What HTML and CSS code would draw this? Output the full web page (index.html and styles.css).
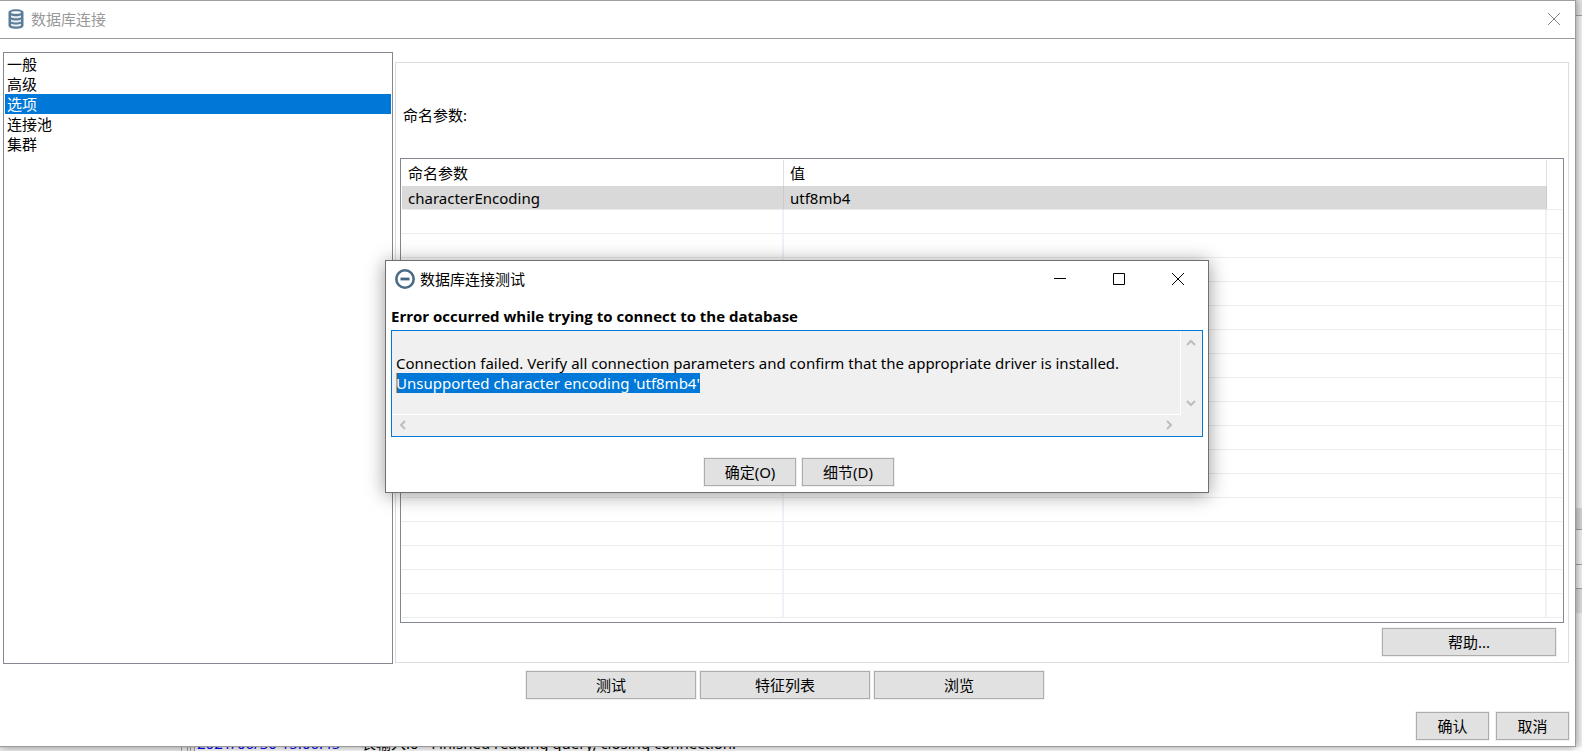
FILE: index.html
```html
<!DOCTYPE html>
<html lang="zh-CN">
<head>
<meta charset="utf-8">
<title>数据库连接</title>
<link rel="stylesheet" href="styles.css">
</head>
<body>
<div class="desktop">
  <div class="workspace">
    <section class="window" aria-label="数据库连接">
      <header class="titlebar">
        <svg class="db-icon" viewBox="0 0 16 20" aria-hidden="true">
          <path d="M.5 3.500v13C.5 18.500 3.500 19.800 8 19.800s7.500-1.300 7.500-3.300v-13C15.500 1.500 12.500.2 8 .2S.5 1.500.5 3.500z" fill="#5b7d97"/>
          <ellipse cx="8" cy="3.500" rx="5" ry="1.300" fill="#fff"/>
          <path d="M3 6.200c2 1.300 8 1.300 10 0v2c-2 1.400-8 1.400-10 0zM3 10.400c2 1.300 8 1.300 10 0v2c-2 1.400-8 1.400-10 0zM3 14.600c2 1.300 8 1.300 10 0v1.800c-2 1.500-8 1.500-10 0z" fill="#e9eff3"/>
        </svg>
        <h1 class="window-title">数据库连接</h1>
        <button class="caption-btn muted" type="button" aria-label="关闭">
          <svg viewBox="0 0 12 12"><path d="M0 0l12 12M12 0L0 12"/></svg>
        </button>
      </header>

      <div class="panes">
        <ul class="categories">
          <li><button type="button">一般</button></li>
          <li><button type="button">高级</button></li>
          <li><button type="button" class="selected">选项</button></li>
          <li><button type="button">连接池</button></li>
          <li><button type="button">集群</button></li>
        </ul>
        <div class="options">
          <p class="options-label" id="params-label">命名参数:</p>
          <div class="grid-box">
            <table class="params" aria-labelledby="params-label">
              <colgroup><col class="col-name"><col><col class="col-rest"></colgroup>
              <thead><tr><th>命名参数</th><th>值</th><th></th></tr></thead>
              <tbody>
                <tr class="selected"><td>characterEncoding</td><td>utf8mb4</td><td></td></tr>
                <tr><td></td><td></td><td></td></tr>
                <tr><td></td><td></td><td></td></tr>
                <tr><td></td><td></td><td></td></tr>
                <tr><td></td><td></td><td></td></tr>
                <tr><td></td><td></td><td></td></tr>
                <tr><td></td><td></td><td></td></tr>
                <tr><td></td><td></td><td></td></tr>
                <tr><td></td><td></td><td></td></tr>
                <tr><td></td><td></td><td></td></tr>
                <tr><td></td><td></td><td></td></tr>
                <tr><td></td><td></td><td></td></tr>
                <tr><td></td><td></td><td></td></tr>
                <tr><td></td><td></td><td></td></tr>
                <tr><td></td><td></td><td></td></tr>
                <tr><td></td><td></td><td></td></tr>
                <tr><td></td><td></td><td></td></tr>
                <tr><td></td><td></td><td></td></tr>
              </tbody>
            </table>
          </div>
          <div class="help-row"><button class="btn help" type="button">帮助...</button></div>
        </div>
      </div>

      <div class="actions">
        <button class="btn wide" type="button">测试</button>
        <button class="btn wide" type="button">特征列表</button>
        <button class="btn wide" type="button">浏览</button>
      </div>
      <footer class="confirm">
        <button class="btn small" type="button">确认</button>
        <button class="btn small" type="button">取消</button>
      </footer>
    </section>
    <div class="backdrop-edge" aria-hidden="true">
      <span class="edge-top"></span><span class="edge-body"></span><span class="edge-bar"></span><span class="edge-row"></span><span class="edge-line"></span><span class="edge-tab"></span><span class="edge-end"></span>
    </div>
  </div>
  <div class="log">
    <span class="log-side"></span>
    <span class="log-split"></span>
    <p class="log-line"><time>2021/06/30 15:06:45</time><span>- 表输入.0 - Finished reading query, closing connection.</span></p>
  </div>

  <section class="dialog" role="dialog" aria-labelledby="dialog-title">
    <header class="dialog-bar">
      <svg class="stop-icon" viewBox="0 0 20 20" aria-hidden="true">
        <circle cx="10" cy="10" r="8.700" fill="none" stroke="#4a6b85" stroke-width="2.600"/>
        <path d="M5.500 10h9" stroke="#44657f" stroke-width="2.800"/>
      </svg>
      <h2 class="dialog-title" id="dialog-title">数据库连接测试</h2>
      <div class="captions">
        <button class="caption-btn" type="button" aria-label="最小化"><svg viewBox="0 0 12 12"><path d="M0 5.500h12"/></svg></button>
        <button class="caption-btn" type="button" aria-label="最大化"><svg viewBox="0 0 12 12"><path d="M.5.5h11v11H.5z"/></svg></button>
        <button class="caption-btn" type="button" aria-label="关闭"><svg viewBox="0 0 12 12"><path d="M0 0l12 12M12 0L0 12"/></svg></button>
      </div>
    </header>
    <h3 class="message">Error occurred while trying to connect to the database</h3>
    <div class="details">
      <div class="details-text" tabindex="0">
        <p>Connection failed. Verify all connection parameters and confirm that the appropriate driver is installed.</p>
        <p><mark>Unsupported character encoding 'utf8mb4'</mark></p>
      </div>
      <div class="scroll vertical">
        <button type="button" aria-label="向上"><svg viewBox="0 0 10 10"><path d="M1 7l4-4 4 4"/></svg></button>
        <button type="button" aria-label="向下"><svg viewBox="0 0 10 10"><path d="M1 3l4 4 4-4"/></svg></button>
      </div>
      <div class="scroll horizontal">
        <button type="button" aria-label="向左"><svg viewBox="0 0 10 10"><path d="M7 1L3 5l4 4"/></svg></button>
        <button type="button" aria-label="向右"><svg viewBox="0 0 10 10"><path d="M3 1l4 4-4 4"/></svg></button>
      </div>
    </div>
    <div class="dialog-actions">
      <button class="btn medium" type="button">确定(O)</button>
      <button class="btn medium" type="button">细节(D)</button>
    </div>
  </section>
</div>
</body>
</html>
```
FILE: styles.css
```css
* { box-sizing: border-box; }

body, h1, h2, h3, p, ul { margin: 0; padding: 0; }

body, button {
  font-family: "Noto Sans", "Noto Sans CJK SC", sans-serif;
  font-size: 15px;
  line-height: 20px;
  color: #000;
}

button { padding: 0; border: 0; background: none; }

.desktop {
  position: relative;
  display: flex;
  flex-direction: column;
  min-height: 100vh;
  background: #f0f0f0;
}

.workspace { display: flex; flex: 1; }

/* Main window */
.window {
  display: flex;
  flex: 1;
  flex-direction: column;
  border-right: 1px solid #9b9b9b;
  border-bottom: 1px solid #9b9b9b;
  background: #fff;
  box-shadow: 0 0 8px rgba(0, 0, 0, .45);
  z-index: 1;
}

.titlebar {
  display: flex;
  align-items: center;
  height: 39px;
  padding: 0 15px 1px 8px;
  border-top: 1px solid #a09ea0;
  border-bottom: 1px solid #9b9b9b;
}

.db-icon { width: 16px; height: 20px; }

.window-title {
  flex: 1;
  margin-left: 7px;
  font-size: 15px;
  font-weight: 400;
  color: #999;
}

.caption-btn { display: flex; }

.caption-btn svg {
  width: 12px;
  height: 12px;
  fill: none;
  stroke: #000;
}

.caption-btn.muted svg { stroke: #888; }

.panes {
  display: flex;
  flex: 1;
  gap: 2px;
  padding: 13px 6px 0 3px;
}

.categories {
  width: 390px;
  padding: 1px;
  border: 1px solid #828790;
  list-style: none;
}

.categories button {
  display: block;
  width: 100%;
  height: 20px;
  padding-left: 2px;
  text-align: left;
}

.categories .selected { background: #0078d7; color: #fff; }

.options {
  display: flex;
  flex: 1;
  flex-direction: column;
  margin: 10px 0 1px;
  padding: 42px 4px 6px;
  border: 1px solid #dcdcdc;
}

.options-label { padding-left: 3px; }

.grid-box {
  flex: 1;
  margin-top: 33px;
  padding: 1px;
  border: 1px solid #828790;
}

.params {
  width: 100%;
  table-layout: fixed;
  border-collapse: separate;
  border-spacing: 0;
}

.col-name { width: 382px; }
.col-rest { width: 15px; }

.params th, .params td {
  height: 24px;
  padding: 0 6px;
  border-right: 2px solid #eef2f8;
  border-bottom: 1px solid #ececec;
  font-weight: 400;
  text-align: left;
}

.params th { height: 26px; border-bottom: 0; border-right: 1px solid #e0e0e0; }
.params th:last-child, .params td:last-child { padding: 0; border-right: 0; }
.params .selected td { border-right: 1px solid #c4cbd2; background: #d9d9d9 padding-box; }
.params .selected td:last-child { border-right: 0; background: none; }

.help-row {
  display: flex;
  justify-content: flex-end;
  padding: 5px 8px 0 0;
}

.btn {
  height: 28px;
  border: 1px solid #adadad;
  background: #e1e1e1;
  box-shadow: 0 0 0 1px #f0f0f0;
}

.help { width: 174px; }
.wide { width: 170px; }
.small { width: 73px; }
.medium { width: 92px; }

.actions {
  display: flex;
  justify-content: center;
  gap: 4px;
  padding: 7px 5px 0 0;
}

.confirm {
  display: flex;
  justify-content: flex-end;
  gap: 7px;
  padding: 13px 6px 6px;
}

/* Application behind the window */
.backdrop-edge {
  display: flex;
  flex-direction: column;
  width: 6px;
}

.edge-top { height: 16px; border-bottom: 1px solid #a0a0a0; background: #e3e3e3; }
.edge-body { flex: 1; }
.edge-bar { height: 22px; border-bottom: 1px solid #a0a0a0; background: #d4d4d4; }
.edge-row { height: 35px; border-bottom: 1px solid #a0a0a0; }
.edge-line { height: 24px; border-bottom: 1px solid #a0a0a0; }
.edge-tab { height: 24px; background: #dcdcdc; }
.edge-end { height: 134px; }

.log {
  display: flex;
  align-items: flex-end;
  height: 4px;
  overflow: hidden;
}

.log-side { width: 181px; }

.log-split {
  width: 14px;
  height: 4px;
  border: solid #a0a0a0;
  border-width: 0 1px;
  background: linear-gradient(90deg, transparent 5px, #a0a0a0 5px 6px, transparent 6px 8px, #a0a0a0 8px 9px, transparent 9px);
}

.log-line {
  display: flex;
  gap: 12px;
  flex: 1;
  height: 18px;
  padding-left: 2px;
  background: #fff;
}

.log-line time { color: #00f; }

/* Connection test dialog */
.dialog {
  position: absolute;
  top: 260px;
  left: 385px;
  z-index: 2;
  width: 824px;
  padding: 0 5px 6px;
  border: 1px solid #707070;
  background: #fff;
  box-shadow: 0 2px 18px rgba(0, 0, 0, .4);
}

.dialog-bar {
  display: flex;
  align-items: center;
  height: 36px;
  padding: 0 19px 0 4px;
}

.stop-icon { width: 20px; height: 20px; }

.dialog-title {
  flex: 1;
  margin-left: 5px;
  font-size: 15px;
  font-weight: 400;
}

.captions { display: flex; gap: 47px; }

.message {
  padding: 9px 0 4px;
  font-family: "Open Sans", "Noto Sans CJK SC", sans-serif;
  font-size: 15px;
  font-weight: 700;
}

.details {
  display: grid;
  grid-template-columns: 1fr 21px;
  grid-template-rows: 84px 21px;
  border: 1px solid #0078d7;
  background: #f0f0f0;
}

.details-text {
  padding: 22px 4px 0;
  border: solid #fff;
  border-width: 0 1px 1px 0;
  white-space: nowrap;
}

.details-text mark {
  display: inline-block;
  background: #0078d7;
  box-shadow: inset 1px 0 #ff8728;
  color: #fff;
}

.scroll {
  display: flex;
  justify-content: space-between;
}

.vertical { flex-direction: column; align-items: center; padding: 7px 1px 7px 0; }
.horizontal { align-items: center; padding: 0 7px 2px 6px; }

.scroll button { display: flex; }

.scroll svg {
  width: 10px;
  height: 10px;
  fill: none;
  stroke: #bdbdbd;
  stroke-width: 2;
}

.dialog-actions {
  display: flex;
  justify-content: center;
  gap: 6px;
  padding: 21px 0 0 4px;
}
```
